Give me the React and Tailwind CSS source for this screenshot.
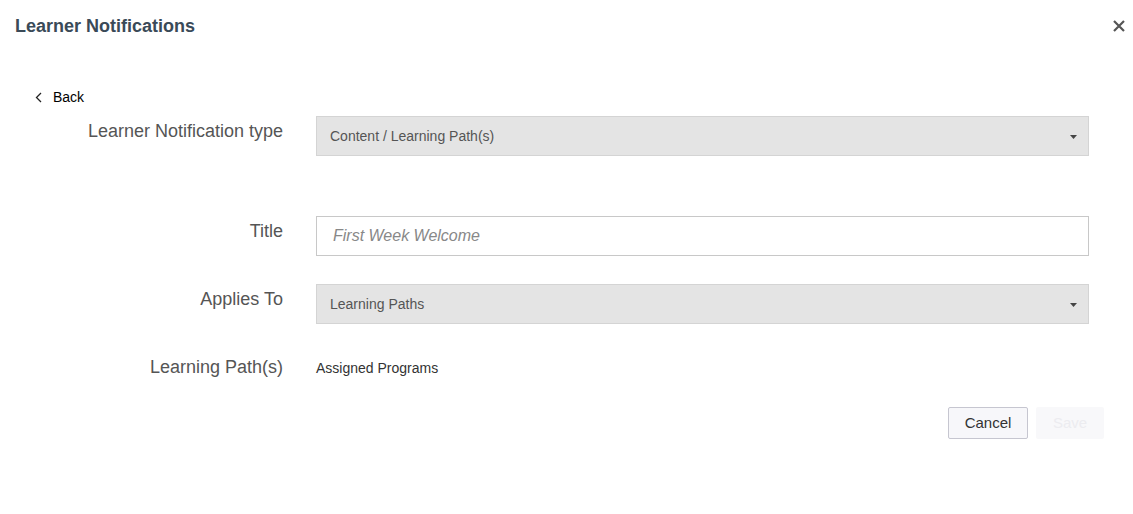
import React from "react";

const font = { fontFamily: '"Liberation Sans", Arial, sans-serif' };

const Caret = () => (
  <svg width="7" height="4" viewBox="0 0 7 4" className="absolute right-[11px] top-[18px]">
    <path d="M0 0 H7 L3.5 4 Z" fill="#444" />
  </svg>
);

const SelectBox = ({ value }) => (
  <div className="relative mr-[15px] h-[40px] border border-[#d4d4d4] bg-[#e4e4e4] pl-[13px] text-[14px] leading-[38px] text-[#555]">
    {value}
    <Caret />
  </div>
);

const Label = ({ children }) => (
  <div className="pt-[5px] text-right text-[18px] leading-[21px] text-[#555]">{children}</div>
);

export default function App() {
  return (
    <div className="h-[514px] w-[1133px] bg-white" style={font}>
      <div className="flex h-[52px] items-center justify-between pl-[15px] pr-[8px]">
        <h1 className="text-[18px] font-bold text-[#3a4a58]">Learner Notifications</h1>
        <svg width="12" height="12" viewBox="0 0 12 12">
          <path d="M1 1 L11 11 M11 1 L1 11" stroke="#555" strokeWidth="2.2" />
        </svg>
      </div>

      <div className="mt-[33px] flex items-center pl-[35px] text-[14px] text-black">
        <svg width="7" height="11" viewBox="0 0 7 11">
          <path d="M6 1 L1.5 5.5 L6 10" stroke="#222" strokeWidth="1.3" fill="none" />
        </svg>
        <span className="ml-[11px] leading-[24px]">Back</span>
      </div>

      <div className="mt-[7px] grid grid-cols-[268px_1fr] gap-x-[33px] pl-[15px] pr-[29px]">
        <Label>Learner Notification type</Label>
        <SelectBox value="Content / Learning Path(s)" />

        <div className="col-span-2 h-[60px]" />

        <Label>Title</Label>
        <div className="mr-[15px] h-[40px] border border-[#c8c8c8] bg-white pl-[16px] text-[16px] italic leading-[38px] text-[#888]">
          First Week Welcome
        </div>

        <div className="col-span-2 h-[28px]" />

        <Label>Applies To</Label>
        <SelectBox value="Learning Paths" />

        <div className="col-span-2 h-[28px]" />

        <Label>Learning Path(s)</Label>
        <div className="pt-[8px] text-[14px] leading-[17px] text-[#333]">Assigned Programs</div>

        <div className="col-span-2 mt-[29px] flex justify-end gap-[8px]">
          <button className="h-[32px] w-[80px] rounded-[2px] border border-[#c6c6d0] bg-[#f7f7fa] text-[15px] text-[#333]">
            Cancel
          </button>
          <button className="h-[32px] w-[68px] rounded-[2px] bg-[#f8f8fa] text-[15px] text-[#ececf0]">
            Save
          </button>
        </div>
      </div>
    </div>
  );
}
